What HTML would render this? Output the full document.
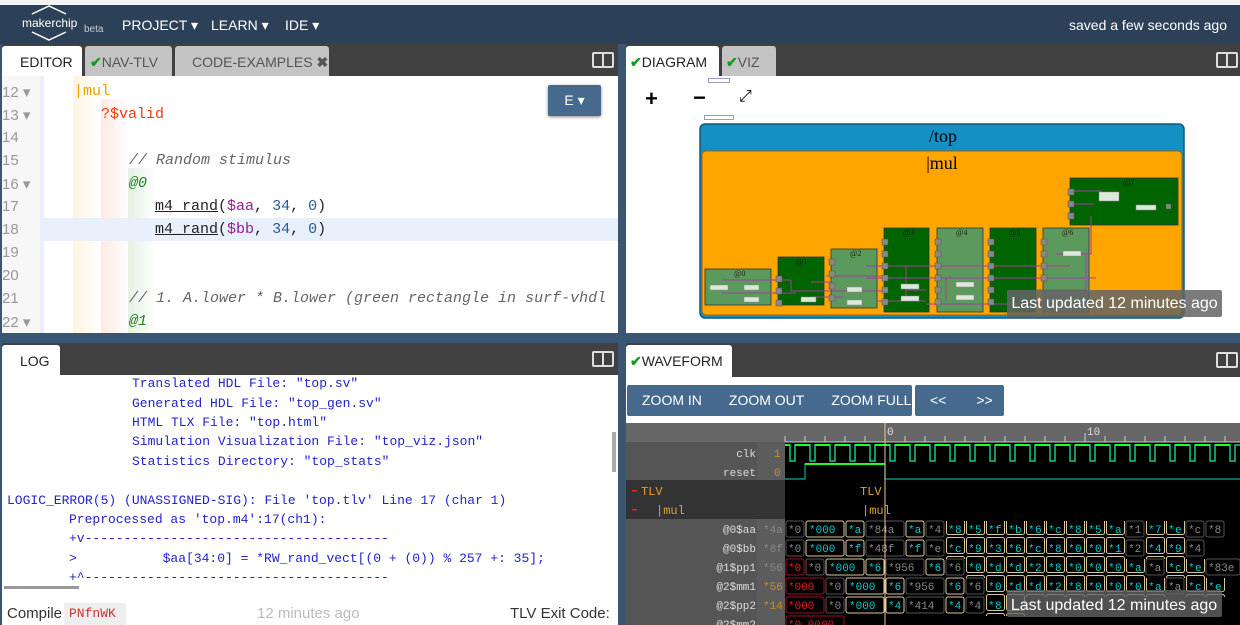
<!DOCTYPE html>
<html><head><meta charset="utf-8">
<style>
*{margin:0;padding:0;box-sizing:border-box}
body{width:1240px;height:625px;overflow:hidden;background:#3b5675;font-family:"Liberation Sans",sans-serif;position:relative}
.a{position:absolute}
.nav{left:0;top:0;width:1240px;height:44px;background:#2c4158;border-top:5px solid #f4f4f4}
.nav span{position:absolute;color:#fff;font-size:14px;top:12px}
.tabbar{background:#404040;height:32px}
.tab{position:absolute;top:2px;height:30px;font-size:14px;line-height:32px;color:#555;background:#c4c4c4;border-radius:3px 3px 0 0;padding-left:8px}
.tab.act{background:#fff;color:#222}
.chk{color:#1a9a1a;font-weight:bold}
.split{position:absolute;width:22px;height:16px;border:2px solid #ddd;border-radius:2px}
.split:after{content:"";position:absolute;left:8px;top:-2px;width:2px;height:16px;background:#ddd}
.mono{font-family:"Liberation Mono",monospace}
.ln{position:absolute;left:0;width:38px;font-size:15px;color:#999;font-family:"Liberation Sans",sans-serif}
.cl{position:absolute;font-size:15px;font-family:"Liberation Mono",monospace;white-space:pre}
.lg{position:absolute;font-size:13px;font-family:"Liberation Mono",monospace;color:#2323cc;white-space:pre}
.btn{position:absolute;top:385px;height:31px;background:#466a8e;color:#fff;font-size:14px;line-height:31px;border-radius:2px}
</style></head><body>
<div class="a nav">
<svg class="a" style="left:20px;top:0px" width="62" height="38" viewBox="0 0 62 38"><path d="M12 9 L29 1 L46 9 M12 27 L29 35 L46 27" stroke="#fff" stroke-width="1.5" fill="none"/><text x="2" y="22" fill="#fff" font-size="12" font-family="Liberation Sans">makerchip</text></svg>
<span style="left:84px;top:19px;font-size:10px;color:#ccc">beta</span>
<span style="left:122px">PROJECT ▾</span>
<span style="left:211px">LEARN ▾</span>
<span style="left:285px">IDE ▾</span>
<span style="left:1069px">saved a few seconds ago</span>
</div>

<!-- LEFT EDITOR -->
<div class="a tabbar" style="left:2px;top:44px;width:616px">
<div class="tab act" style="left:0;width:80px;padding-left:18px">EDITOR</div>
<div class="tab" style="left:83px;width:87px;padding-left:5px"><span class="chk">✔</span>NAV-TLV</div>
<div class="tab" style="left:173px;width:154px;padding-left:17px">CODE-EXAMPLES <b>✖</b></div>
<div class="split" style="left:590px;top:8px"></div>
</div>
<div class="a" style="left:2px;top:76px;width:616px;height:257px;background:#fff;overflow:hidden">
<div class="a" style="left:0;top:0;width:38px;height:257px;background:#f7f7f7"></div>
<div class="a" style="left:38px;top:0;width:4px;height:257px;background:#eceefb"></div>
<div class="a" style="left:71px;top:0;width:28px;height:257px;background:linear-gradient(90deg,#fff4e0,#fff)"></div>
<div class="a" style="left:99px;top:23px;width:28px;height:234px;background:linear-gradient(90deg,#ffe9e4,#fff)"></div>
<div class="a" style="left:126px;top:92px;width:28px;height:165px;background:linear-gradient(90deg,#e4f1e4,#fff)"></div>
<div class="a" style="left:38px;top:142px;width:578px;height:23px;background:#e8f0fc"></div>
<div class="ln" style="top:7px">12 ▾</div><div class="ln" style="top:30px">13 ▾</div><div class="ln" style="top:53px">14</div><div class="ln" style="top:76px">15</div><div class="ln" style="top:99px">16 ▾</div><div class="ln" style="top:122px">17</div><div class="ln" style="top:145px">18</div><div class="ln" style="top:168px">19</div><div class="ln" style="top:191px">20</div><div class="ln" style="top:214px">21</div><div class="ln" style="top:237px">22 ▾</div>
<div class="cl" style="left:72px;top:7px;color:#f0a000">|mul</div>
<div class="cl" style="left:99px;top:30px;color:#f03c10">?$valid</div>
<div class="cl" style="left:127px;top:76px;color:#666;font-style:italic">// Random stimulus</div>
<div class="cl" style="left:127px;top:99px;color:#208020;font-style:italic">@0</div>
<div class="cl" style="left:153px;top:122px;color:#222"><u>m4_rand</u>(<span style="color:#9a1a9a">$aa</span>, <span style="color:#2a5a9a">34</span>, <span style="color:#2a5a9a">0</span>)</div>
<div class="cl" style="left:153px;top:145px;color:#222"><u>m4_rand</u>(<span style="color:#9a1a9a">$bb</span>, <span style="color:#2a5a9a">34</span>, <span style="color:#2a5a9a">0</span>)</div>
<div class="cl" style="left:127px;top:214px;color:#666;font-style:italic">// 1. A.lower * B.lower (green rectangle in surf-vhdl</div>
<div class="cl" style="left:127px;top:237px;color:#208020;font-style:italic">@1</div>
<div class="a" style="left:546px;top:9px;width:53px;height:31px;background:#466a8e;border-radius:2px;color:#fff;font-size:14px;line-height:31px;text-align:center;box-shadow:0 1px 3px #888">E ▾</div>
</div>

<!-- LEFT LOG -->
<div class="a tabbar" style="left:2px;top:343px;width:616px">
<div class="tab act" style="left:0;width:58px;padding-left:18px">LOG</div>
<div class="split" style="left:590px;top:8px"></div>
</div>
<div class="a" style="left:2px;top:375px;width:616px;height:250px;background:#fff;overflow:hidden">
<div class="lg" style="left:130px;top:1px">Translated HDL File: "top.sv"</div>
<div class="lg" style="left:130px;top:21px">Generated HDL File: "top_gen.sv"</div>
<div class="lg" style="left:130px;top:40px">HTML TLX File: "top.html"</div>
<div class="lg" style="left:130px;top:59px">Simulation Visualization File: "top_viz.json"</div>
<div class="lg" style="left:130px;top:79px">Statistics Directory: "top_stats"</div>
<div class="lg" style="left:5px;top:118px">LOGIC_ERROR(5) (UNASSIGNED-SIG): File 'top.tlv' Line 17 (char 1)</div>
<div class="lg" style="left:67px;top:137px">Preprocessed as 'top.m4':17(ch1):</div>
<div class="lg" style="left:67px;top:156px">+v---------------------------------------</div>
<div class="lg" style="left:67px;top:176px">&gt;           $aa[34:0] = *RW_rand_vect[(0 + (0)) % 257 +: 35];</div>
<div class="lg" style="left:67px;top:195px">+^---------------------------------------</div>
<div class="a" style="left:610px;top:57px;width:4px;height:40px;background:#aaa"></div>
<div class="a" style="left:2px;top:211px;width:75px;height:3px;background:#999"></div>
<div class="a" style="left:5px;top:230px;font-size:15px;color:#333">Compile</div>
<div class="a mono" style="left:62px;top:228px;width:62px;height:22px;background:#eee;color:#c33;font-size:13px;line-height:22px;padding-left:5px">PNfnWK</div>
<div class="a" style="left:255px;top:230px;font-size:15px;color:#bbb">12 minutes ago</div>
<div class="a" style="left:508px;top:230px;font-size:15px;color:#333">TLV Exit Code:</div>
</div>

<!-- RIGHT DIAGRAM -->
<div class="a tabbar" style="left:626px;top:44px;width:614px">
<div class="tab act" style="left:0;width:93px;padding-left:4px"><span class="chk">✔</span>DIAGRAM</div>
<div class="tab" style="left:96px;width:54px;padding-left:4px"><span class="chk">✔</span>VIZ</div>
<div class="split" style="left:590px;top:8px"></div>
</div>
<div class="a" style="left:626px;top:76px;width:614px;height:257px;background:#fff;overflow:hidden">
<div class="a" style="left:19px;top:10px;font-size:22px;font-weight:bold">+</div>
<div class="a" style="left:67px;top:9px;font-size:22px;font-weight:bold">−</div>
<div class="a" style="left:113px;top:12px;font-size:16px">⤢</div>
<div class="a" style="left:82px;top:2px;width:22px;height:5px;border:1px solid #99c"></div>
<div class="a" style="left:78px;top:39px;width:30px;height:5px;border:1px solid #99c"></div>
<svg class="a" style="left:0;top:0" width="614" height="257">
<rect x="74" y="48" width="484" height="194" rx="5" fill="#1490c4" stroke="#0a5a80" stroke-width="1.5"/>
<text x="317" y="66" font-family="Liberation Serif" font-size="18" text-anchor="middle">/top</text>
<rect x="76" y="75" width="480" height="164" rx="4" fill="#ffa500" stroke="#a06000"/>
<text x="316" y="93" font-family="Liberation Serif" font-size="18" text-anchor="middle">|mul</text>
<g stroke="#333" stroke-width="0.8">
<rect x="79" y="193" width="66" height="36" fill="#5c995c"/>
<rect x="152" y="181" width="46" height="48" fill="#006400"/>
<rect x="205" y="173" width="46" height="59" fill="#5c995c"/>
<rect x="258" y="152" width="45" height="84" fill="#006400"/>
<rect x="311" y="152" width="46" height="84" fill="#5c995c"/>
<rect x="364" y="152" width="46" height="84" fill="#006400"/>
<rect x="417" y="152" width="46" height="84" fill="#5c995c"/>
<rect x="444" y="102" width="108" height="47" fill="#006400"/>
</g>
<g font-family="Liberation Serif" font-size="8" fill="#222">
<text x="108" y="200">@0</text><text x="170" y="188">@1</text><text x="224" y="180">@2</text><text x="277" y="159">@3</text><text x="330" y="159">@4</text><text x="383" y="159">@5</text><text x="436" y="159">@6</text><text x="497" y="109">@7</text></g>
<g stroke="#a040a0" stroke-width="1" fill="none">
<path d="M96 204H165M96 217H160M165 204V215H200M160 217H170M185 206H205M185 221H218M200 200H258M200 215H258M240 190H430M240 202H470M280 190V225M280 214H300M250 225H300M310 190H364M320 202V225M300 228H430M410 214H460M430 190H444M465 140V178H430M468 128H444M476 115H444M460 178V225"/>
</g>
<g fill="#888" stroke="#555" stroke-width="0.5">
<rect x="150" y="200" width="6" height="6"/><rect x="150" y="212" width="6" height="6"/><rect x="150" y="224" width="6" height="6"/>
<rect x="203" y="183" width="6" height="6"/><rect x="203" y="195" width="6" height="6"/><rect x="203" y="207" width="6" height="6"/><rect x="203" y="219" width="6" height="6"/>
<rect x="256" y="163" width="6" height="6"/><rect x="256" y="175" width="6" height="6"/><rect x="256" y="187" width="6" height="6"/><rect x="256" y="199" width="6" height="6"/><rect x="256" y="211" width="6" height="6"/><rect x="256" y="223" width="6" height="6"/>
<rect x="309" y="163" width="6" height="6"/><rect x="309" y="175" width="6" height="6"/><rect x="309" y="187" width="6" height="6"/><rect x="309" y="199" width="6" height="6"/><rect x="309" y="211" width="6" height="6"/><rect x="309" y="223" width="6" height="6"/>
<rect x="362" y="163" width="6" height="6"/><rect x="362" y="175" width="6" height="6"/><rect x="362" y="187" width="6" height="6"/><rect x="362" y="199" width="6" height="6"/><rect x="362" y="211" width="6" height="6"/><rect x="362" y="223" width="6" height="6"/>
<rect x="415" y="163" width="6" height="6"/><rect x="415" y="175" width="6" height="6"/><rect x="415" y="187" width="6" height="6"/><rect x="415" y="199" width="6" height="6"/>
<rect x="442" y="113" width="6" height="6"/><rect x="442" y="125" width="6" height="6"/><rect x="442" y="137" width="6" height="6"/><rect x="540" y="128" width="5" height="5"/>
</g>
<g fill="#dde8dd" stroke="#888" stroke-width="0.5">
<rect x="84" y="209" width="18" height="5"/><rect x="118" y="209" width="15" height="5"/><rect x="118" y="221" width="15" height="5"/><rect x="175" y="221" width="15" height="5"/><rect x="221" y="211" width="15" height="5"/><rect x="221" y="224" width="15" height="5"/><rect x="275" y="208" width="18" height="5"/><rect x="275" y="220" width="18" height="5"/><rect x="330" y="206" width="18" height="5"/><rect x="330" y="219" width="18" height="5"/><rect x="437" y="175" width="18" height="5"/><rect x="473" y="116" width="20" height="9"/><rect x="510" y="129" width="20" height="5"/>
</g>
</svg>
<div class="a" style="left:381px;top:214px;width:215px;height:27px;background:rgba(100,100,100,.85);color:#fff;font-size:16px;line-height:27px;text-align:center;border-radius:2px">Last updated 12 minutes ago</div>
</div>

<!-- RIGHT WAVEFORM -->
<div class="a tabbar" style="left:626px;top:343px;width:614px;height:34px">
<div class="tab act" style="left:0;width:106px;height:32px;padding-left:4px"><span class="chk">✔</span>WAVEFORM</div>
<div class="split" style="left:590px;top:9px"></div>
</div>
<div class="a" style="left:626px;top:377px;width:614px;height:248px;background:#fff;overflow:hidden">
<div class="btn" style="left:1px;top:8px;width:285px"><span style="margin-left:15px">ZOOM IN</span><span style="margin-left:27px">ZOOM OUT</span><span style="margin-left:27px">ZOOM FULL</span></div>
<div class="btn" style="left:289px;top:8px;width:89px"><span style="margin-left:15px">&lt;&lt;</span><span style="margin-left:30px">&gt;&gt;</span></div>
</div>
<svg class="a" style="left:626px;top:423px" width="614" height="202" font-family="Liberation Mono" font-size="11">
<defs>
<pattern id="tc" x="0" y="0" width="20" height="19" patternUnits="userSpaceOnUse"><rect x="0.5" y="0.5" width="18" height="16" rx="2" fill="none" stroke="#d8c8a0"/></pattern>
</defs>
<rect width="614" height="202" fill="#000"/>
<rect width="614" height="19" fill="#666"/>
<rect y="19" width="159" height="38" fill="#555"/>
<rect x="131" y="19" width="28" height="38" fill="#5c5c5c"/>
<rect y="57" width="159" height="39" fill="#333"/>
<rect y="96" width="159" height="106" fill="#555"/>
<rect x="131" y="96" width="28" height="106" fill="#5c5c5c"/>
<g stroke="#ccc" stroke-width="1">
<path d="M159 19V13M179 19V13M199 19V13M219 19V13M239 19V13M259 19V10M279 19V13M299 19V13M319 19V13M339 19V13M359 19V13M379 19V13M399 19V13M419 19V13M439 19V13M459 19V10M479 19V13M499 19V13M519 19V13M539 19V13M559 19V13M579 19V13M599 19V13M159 19H614"/></g>
<text x="261" y="12" fill="#ddd">0</text><text x="461" y="12" fill="#ddd">10</text>
<g fill="#ddd" text-anchor="end"><text x="130" y="34">clk</text><text x="130" y="53">reset</text><text x="130" y="110">@0$aa</text><text x="130" y="129">@0$bb</text><text x="130" y="148">@1$pp1</text><text x="130" y="167">@2$mm1</text><text x="130" y="186">@2$pp2</text><text x="130" y="205">@2$mm2</text></g>
<g fill="#d88a20"><text x="148" y="34">1</text><text x="148" y="53">0</text><text x="137" y="167">*56</text><text x="137" y="186">*14</text></g>
<g fill="#888"><text x="137" y="110">*4a</text><text x="137" y="129">*8f</text><text x="137" y="148">*56</text></g>
<rect x="6" y="67" width="5" height="1.5" fill="#e22"/><text x="15" y="72" fill="#e0a030" font-size="12">TLV</text>
<rect x="6" y="86" width="5" height="1.5" fill="#e22"/><text x="30" y="91" fill="#e0a030" font-size="12">|mul</text>
<text x="234" y="72" fill="#e0a030" font-size="12">TLV</text><text x="236" y="91" fill="#e0a030" font-size="12">|mul</text>
<path d="M159 22H164V38H169V22H184V38H189V22H204V38H209V22H224V38H229V22H244V38H249V22H264V38H269V22H284V38H289V22H304V38H309V22H324V38H329V22H344V38H349V22H364V38H369V22H384V38H389V22H404V38H409V22H424V38H429V22H444V38H449V22H464V38H469V22H484V38H489V22H504V38H509V22H524V38H529V22H544V38H549V22H564V38H569V22H584V38H589V22H604V38H609V22H614" stroke="#1c8" stroke-width="1.5" fill="none"/>
<path d="M159 22H164M169 22H184M189 22H204M209 22H224M229 22H244M249 22H264M269 22H284M289 22H304M309 22H324M329 22H344M349 22H364M369 22H384M389 22H404M409 22H424M429 22H444M449 22H464M469 22H484M489 22H504M509 22H524M529 22H544M549 22H564M569 22H584M589 22H604" stroke="#2f2" stroke-width="2"/>
<path d="M159 56H179V41H259V56H614" stroke="#1a9" stroke-width="1.2" fill="none"/><path d="M179 41H259" stroke="#2f2" stroke-width="2"/>
<g fill="url(#tc)">
<rect x="320" y="98" width="180" height="19"/><rect x="520" y="98" width="40" height="19"/>
<rect x="320" y="117" width="180" height="19"/><rect x="520" y="117" width="40" height="19"/>
<rect x="340" y="136" width="180" height="19"/><rect x="540" y="136" width="40" height="19"/>
<rect x="360" y="155" width="180" height="19"/><rect x="560" y="155" width="40" height="19"/>
<rect x="360" y="174" width="40" height="19"/>
</g>
<g fill="none" stroke-width="1">
<g stroke="#555"><rect x="160" y="98" width="18" height="16" rx="2"/><rect x="240" y="98" width="38" height="16" rx="2"/><rect x="300" y="98" width="18" height="16" rx="2"/><rect x="500" y="98" width="18" height="16" rx="2"/><rect x="560" y="98" width="18" height="16" rx="2"/><rect x="580" y="98" width="18" height="16" rx="2"/>
<rect x="160" y="117" width="18" height="16" rx="2"/><rect x="240" y="117" width="38" height="16" rx="2"/><rect x="300" y="117" width="18" height="16" rx="2"/><rect x="500" y="117" width="18" height="16" rx="2"/><rect x="560" y="117" width="18" height="16" rx="2"/>
<rect x="180" y="136" width="18" height="16" rx="2"/><rect x="260" y="136" width="38" height="16" rx="2"/><rect x="320" y="136" width="18" height="16" rx="2"/><rect x="520" y="136" width="18" height="16" rx="2"/><rect x="580" y="136" width="34" height="16" rx="2"/>
<rect x="200" y="155" width="18" height="16" rx="2"/><rect x="280" y="155" width="38" height="16" rx="2"/><rect x="340" y="155" width="18" height="16" rx="2"/><rect x="540" y="155" width="18" height="16" rx="2"/>
<rect x="200" y="174" width="18" height="16" rx="2"/><rect x="280" y="174" width="38" height="16" rx="2"/><rect x="340" y="174" width="18" height="16" rx="2"/></g>
<g stroke="#d8c8a0"><rect x="180" y="98" width="38" height="16" rx="2"/><rect x="220" y="98" width="18" height="16" rx="2"/><rect x="280" y="98" width="18" height="16" rx="2"/>
<rect x="180" y="117" width="38" height="16" rx="2"/><rect x="220" y="117" width="18" height="16" rx="2"/><rect x="280" y="117" width="18" height="16" rx="2"/>
<rect x="200" y="136" width="38" height="16" rx="2"/><rect x="240" y="136" width="18" height="16" rx="2"/><rect x="300" y="136" width="18" height="16" rx="2"/>
<rect x="220" y="155" width="38" height="16" rx="2"/><rect x="260" y="155" width="18" height="16" rx="2"/><rect x="320" y="155" width="18" height="16" rx="2"/>
<rect x="220" y="174" width="38" height="16" rx="2"/><rect x="260" y="174" width="18" height="16" rx="2"/><rect x="320" y="174" width="18" height="16" rx="2"/></g>
<g stroke="#a01020"><rect x="160" y="136" width="18" height="16" rx="2"/><rect x="160" y="155" width="38" height="16" rx="2"/><rect x="160" y="174" width="38" height="16" rx="2"/><rect x="160" y="193" width="58" height="16" rx="2"/></g>
</g>
<g fill="#0cc"><text x="183" y="110">*000</text><text x="222" y="110">*a</text><text x="282" y="110">*a</text>
<text x="322 329 342 349 362 369 382 389 402 409 422 429 442 449 462 469 482 489" y="110">*8*5*f*b*6*c*8*5*a</text><text x="522 529 542 549" y="110">*7*e</text>
<text x="183" y="129">*000</text><text x="222" y="129">*f</text><text x="282" y="129">*f</text>
<text x="322 329 342 349 362 369 382 389 402 409 422 429 442 449 462 469 482 489" y="129">*c*9*3*6*c*8*0*0*1</text><text x="522 529 542 549" y="129">*4*9</text>
<text x="203" y="148">*000</text><text x="242" y="148">*6</text><text x="302" y="148">*6</text>
<text x="342 349 362 369 382 389 402 409 422 429 442 449 462 469 482 489 502 509" y="148">*0*d*d*2*8*0*0*0*a</text><text x="542 549 562 569" y="148">*c*e</text>
<text x="223" y="167">*000</text><text x="262" y="167">*6</text><text x="322" y="167">*6</text>
<text x="362 369 382 389 402 409 422 429 442 449 462 469 482 489 502 509 522 529" y="167">*0*d*d*2*8*0*0*0*a</text><text x="562 569 582 589" y="167">*c*e</text>
<text x="223" y="186">*000</text><text x="262" y="186">*4</text><text x="322" y="186">*4</text><text x="362 369" y="186">*8</text></g>
<g fill="#888"><text x="162" y="110">*0</text><text x="242" y="110">*84a</text><text x="302" y="110">*4</text><text x="502" y="110">*1</text><text x="562" y="110">*c</text><text x="582" y="110">*8</text>
<text x="162" y="129">*0</text><text x="242" y="129">*48f</text><text x="302" y="129">*e</text><text x="502" y="129">*2</text><text x="562" y="129">*4</text>
<text x="182" y="148">*0</text><text x="262" y="148">*956</text><text x="322" y="148">*6</text><text x="522" y="148">*a</text><text x="582" y="148">*83e</text>
<text x="202" y="167">*0</text><text x="282" y="167">*956</text><text x="342" y="167">*6</text><text x="542" y="167">*a</text>
<text x="202" y="186">*0</text><text x="282" y="186">*414</text><text x="342" y="186">*4</text></g>
<g fill="#d22"><text x="162" y="148">*0</text><text x="162" y="167">*000</text><text x="162" y="186">*000</text><text x="162" y="205">*0_0000</text></g>
<path d="M259 0V202" stroke="#e8c890" stroke-width="1"/>
<rect x="381" y="167" width="215" height="27" rx="2" fill="rgba(100,100,100,.8)"/>
<text x="488" y="187" fill="#fff" font-family="Liberation Sans" font-size="16" text-anchor="middle">Last updated 12 minutes ago</text>
</svg>
</body></html>
